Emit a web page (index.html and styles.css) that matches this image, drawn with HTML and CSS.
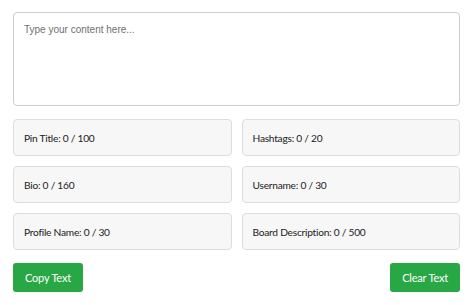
FILE: index.html
```html
<!DOCTYPE html>
<html lang="en">
<head>
    <meta charset="UTF-8">
    <meta name="viewport" content="width=device-width, initial-scale=1.0">
    <title>Pinterest Character Counter</title>
    <link rel="stylesheet" href="styles.css">
</head>
<body>

<div class="container">
    <textarea id="contentInput" placeholder="Type your content here..."></textarea>

    <div class="counters">
        <div class="counter">Pin Title: <span id="pinTitle">0</span> / 100</div>
        <div class="counter">Hashtags: <span id="hashtags">0</span> / 20</div>
        <div class="counter">Bio: <span id="bio">0</span> / 160</div>
        <div class="counter">Username: <span id="username">0</span> / 30</div>
        <div class="counter">Profile Name: <span id="profileName">0</span> / 30</div>
        <div class="counter">Board Description: <span id="boardDesc">0</span> / 500</div>
    </div>

    <div class="button-container">
        <button id="copyButton">Copy Text</button>
        <button id="clearButton">Clear Text</button>
    </div>
</div>

</body>
</html>
```

FILE: styles.css
```css
body {
    margin: 0;
    padding: 0;
    background-color: #ffffff;
    font-family: 'Lato', sans-serif;
    color: #222222;
}

.container {
    padding: 12px 14px 0 13px;
    display: flex;
    flex-direction: column;
}

textarea {
    width: 100%;
    height: 94px;
    box-sizing: border-box;
    padding: 11px 10px;
    border: 1px solid #cccccc;
    border-radius: 4px;
    font-family: 'Liberation Sans', Arial, sans-serif;
    font-size: 10px;
    resize: none;
    margin: 0;
}

textarea::placeholder {
    color: #707070;
    opacity: 1;
}

.counters {
    display: grid;
    grid-template-columns: 1fr 1fr;
    gap: 10px;
    margin-top: 13px;
}

.counter {
    height: 37px;
    box-sizing: border-box;
    padding: 0 10px;
    line-height: 36px;
    background-color: #f7f7f7;
    border: 1px solid #dddddd;
    border-radius: 4px;
    font-size: 10.2px;
    letter-spacing: -0.25px;
}

.button-container {
    display: flex;
    justify-content: space-between;
    margin-top: 13px;
}

button {
    height: 29px;
    padding: 0 12px;
    border: none;
    border-radius: 3px;
    background-color: #28a745;
    color: #ffffff;
    font-family: 'Lato', sans-serif;
    font-size: 11px;
    letter-spacing: -0.2px;
}
```
